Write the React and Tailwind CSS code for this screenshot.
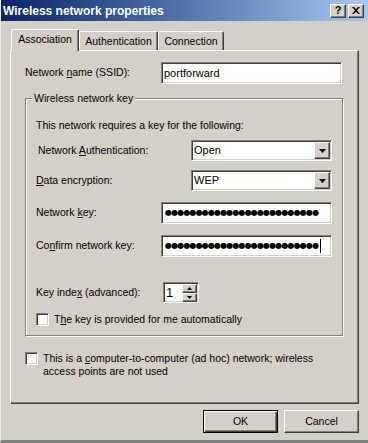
const FONT = "font-['Liberation_Sans',Arial,sans-serif]"
const SUNKEN =
  'border border-t-[#808080] border-l-[#808080] border-b-white border-r-white shadow-[inset_1px_1px_0_#404040,inset_-1px_-1px_0_#d4d0c8] bg-white'
const RAISED =
  'border border-t-white border-l-white border-b-[#404040] border-r-[#404040] shadow-[inset_-1px_-1px_0_#808080] bg-[#d4d0c8]'

const DOTS = '●'.repeat(25)

function DownArrow() {
  return (
    <svg width="7" height="4" viewBox="0 0 7 4">
      <path d="M0 0h7L3.5 4z" fill="#000" />
    </svg>
  )
}

function Select({ value }) {
  return (
    <div className={`${SUNKEN} w-[141px] h-[21px] flex items-center pl-[2px] pr-[1px]`}>
      <span className="flex-1 text-[11px]">{value}</span>
      <div className={`${RAISED} w-[16px] h-[17px] flex items-center justify-center`}>
        <DownArrow />
      </div>
    </div>
  )
}

function Password({ caret }) {
  return (
    <div className={`${SUNKEN} w-[171px] h-[22px] flex items-center pl-[3px] overflow-hidden`}>
      <span className="font-['DejaVu_Sans',sans-serif] text-[8px] tracking-[-0.85px] leading-none whitespace-nowrap">
        {DOTS}
      </span>
      {caret && <span className="w-px h-[14px] bg-black ml-[2px]" />}
    </div>
  )
}

function Checkbox() {
  return <div className={`${SUNKEN} w-[13px] h-[13px] shrink-0`} />
}

function Tab({ label, active, w }) {
  return active ? (
    <div
      className={`relative z-10 -mb-px h-[22px] ${w} bg-[#d4d0c8] border-l border-t border-r border-l-white border-t-white border-r-[#404040] shadow-[inset_-1px_0_0_#808080] rounded-t-[2px] flex items-center justify-center pb-[2px]`}
    >
      {label}
    </div>
  ) : (
    <div
      className={`h-[19px] ${w} border-l border-t border-r border-l-white border-t-white border-r-[#404040] shadow-[inset_-1px_0_0_#808080] rounded-t-[2px] flex items-center justify-center pt-px`}
    >
      {label}
    </div>
  )
}

export default function App() {
  return (
    <div
      className={`${FONT} w-[368px] h-[443px] bg-[#d4d0c8] text-[10.5px] text-black flex flex-col border-b-[3px] border-b-[#808080] border-l border-l-[#f0efec] overflow-hidden`}
    >
      {/* Title bar */}
      <div className="h-[21px] shrink-0 bg-linear-to-r from-[#0a246a] to-[#a6caf0] flex items-center pl-[2px] pr-[4px]">
        <span className="text-white font-bold text-[12px]">Wireless network properties</span>
        <div className="ml-auto flex gap-[2px]">
          <div className={`${RAISED} w-[16px] h-[14px] flex items-center justify-center font-bold text-[11px] leading-none`}>
            ?
          </div>
          <div className={`${RAISED} w-[16px] h-[14px] flex items-center justify-center`}>
            <svg width="8" height="7" viewBox="0 0 8 7">
              <path d="M0 0h2l2 2.2L6 0h2L5 3.5 8 7H6L4 4.8 2 7H0l3-3.5z" fill="#000" />
            </svg>
          </div>
        </div>
      </div>

      <div className="flex flex-col px-[9px]">
        {/* Tabs */}
        <div className="mt-[8px] h-[21px] flex items-end pl-px">
          <Tab label="Association" active w="w-[68px]" />
          <Tab label="Authentication" w="w-[79px]" />
          <Tab label="Connection" w="w-[66px]" />
        </div>

        {/* Panel */}
        <div className="h-[354px] border border-t-white border-l-white border-r-[#404040] border-b-[#404040] shadow-[inset_-1px_-1px_0_#808080] pl-[14px] flex flex-col">
          <div className="mt-[11px] flex items-center h-[22px]">
            <span className="w-[136px]">
              Network <u>n</u>ame (SSID):
            </span>
            <div className={`${SUNKEN} w-[181px] h-[22px] flex items-center pl-[2px] text-[11px]`}>portforward</div>
          </div>

          {/* Group box */}
          <div className="relative mt-[14px] w-[318px] h-[238px] border border-[#808080] shadow-[inset_1px_1px_0_#fff,1px_1px_0_#fff] pl-[10px] flex flex-col">
            <span className="absolute -top-[8px] left-[6px] px-[2px] bg-[#d4d0c8] leading-[14px]">
              Wireless network key
            </span>
            <span className="mt-[19px] leading-[14px]">This network requires a key for the following:</span>

            <div className="mt-[8px] flex items-center">
              <span className="w-[155px] pl-[2px]">
                Network <u>A</u>uthentication:
              </span>
              <Select value="Open" />
            </div>
            <div className="mt-[9px] flex items-center">
              <span className="w-[155px]">
                <u>D</u>ata encryption:
              </span>
              <Select value="WEP" />
            </div>

            <div className="mt-[11px] flex items-center">
              <span className="w-[125px]">
                Network <u>k</u>ey:
              </span>
              <Password />
            </div>
            <div className="mt-[11px] flex items-center">
              <span className="w-[125px]">
                Co<u>n</u>firm network key:
              </span>
              <Password caret />
            </div>

            <div className="mt-[25px] flex items-center">
              <span className="w-[127px]">
                Key inde<u>x</u> (advanced):
              </span>
              <div className={`${SUNKEN} w-[36px] h-[21px] flex items-center pl-[2px] pr-px`}>
                <span className="flex-1 text-[13px]">1</span>
                <div className="flex flex-col">
                  <div className={`${RAISED} w-[15px] h-[9px] flex items-center justify-center`}>
                    <svg width="5" height="3" viewBox="0 0 5 3">
                      <path d="M0 3h5L2.5 0z" fill="#000" />
                    </svg>
                  </div>
                  <div className={`${RAISED} w-[15px] h-[9px] flex items-center justify-center`}>
                    <svg width="5" height="3" viewBox="0 0 5 3">
                      <path d="M0 0h5L2.5 3z" fill="#000" />
                    </svg>
                  </div>
                </div>
              </div>
            </div>

            <div className="mt-[9px] flex items-center gap-[5px]">
              <Checkbox />
              <span>
                T<u>h</u>e key is provided for me automatically
              </span>
            </div>
          </div>

          <div className="mt-[16px] flex items-start gap-[5px]">
            <Checkbox />
            <div className="flex flex-col leading-[13px]">
              <span>
                This is a <u>c</u>omputer-to-computer (ad hoc) network; wireless
              </span>
              <span>access points are not used</span>
            </div>
          </div>
        </div>

        {/* Buttons */}
        <div className="mt-[6px] flex justify-end gap-[6px]">
          <div className="w-[75px] h-[23px] border border-black bg-[#d4d0c8] shadow-[inset_1px_1px_0_#fff,inset_-1px_-1px_0_#404040,inset_-2px_-2px_0_#808080] flex items-center justify-center">
            OK
          </div>
          <div className={`${RAISED} w-[75px] h-[23px] flex items-center justify-center`}>Cancel</div>
        </div>
      </div>
    </div>
  )
}
